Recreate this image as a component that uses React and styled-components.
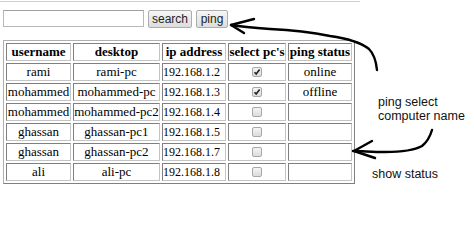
import React from "react";
import styled, { createGlobalStyle } from "styled-components";

const Global = createGlobalStyle`
  html, body { margin: 0; padding: 0; background: #fff; }
  body { font-family: "Liberation Serif", "Times New Roman", serif; color: #000; }
`;

const Page = styled.div`
  position: relative;
  width: 474px;
  height: 247px;
  overflow: hidden;
  background: #fff;
`;

const TopRule = styled.div`
  margin-top: 1px;
  width: 360px;
  height: 0;
  border-top: 1px solid #d0d0d0;
`;

const SearchBar = styled.form`
  display: flex;
  align-items: flex-start;
  gap: 4px;
  margin: 8px 0 0 3px;
`;

const SearchInput = styled.input`
  box-sizing: border-box;
  width: 141px;
  height: 17px;
  margin: 0;
  border: 1px solid #b8b8b8;
  border-top-color: #a0a0a0;
  background: #fff;
  padding: 0 2px;
`;

const Button = styled.button`
  box-sizing: border-box;
  width: ${(p) => p.$w}px;
  height: 18px;
  margin: 0;
  padding: 0;
  border: 1px solid #adadad;
  border-radius: 2px;
  background: linear-gradient(#f6f6f6, #dddddd);
  font-family: "Liberation Sans", Arial, sans-serif;
  font-size: 12px;
  line-height: 16px;
  color: #222;
`;

const Table = styled.table`
  margin: 12px 0 0 3px;
  width: 352px;
  table-layout: fixed;
  border-collapse: separate;
  border-spacing: 2px;
  border: 1px solid;
  border-color: #b0b0b0 #808080 #808080 #b0b0b0;
  font-size: 13px;
  line-height: 16px;
`;

const Cell = styled.td`
  box-sizing: border-box;
  height: 18px;
  padding: 0;
  border: 1px solid;
  border-color: #808080 #c4c4c4 #c4c4c4 #808080;
  text-align: ${(p) => (p.$left ? "left" : "center")};
  font-size: ${(p) => (p.$ip ? "12px" : "13px")};
  white-space: nowrap;
  overflow: hidden;
  vertical-align: middle;
`;

const Head = styled(Cell).attrs({ as: "th" })`
  font-weight: bold;
  text-align: center;
`;

const Check = styled.span`
  display: inline-block;
  box-sizing: border-box;
  width: 10px;
  height: 10px;
  margin-top: 3px;
  vertical-align: top;
  border: 1px solid #a8a8a8;
  border-radius: 2px;
  background: linear-gradient(#f4f4f4, #dcdcdc);
  position: relative;
  svg { position: absolute; left: 0; top: 0; }
`;

const Note = styled.div`
  position: absolute;
  left: ${(p) => p.$x}px;
  top: ${(p) => p.$y}px;
  font-family: "Liberation Sans", Arial, sans-serif;
  font-size: 12.5px;
  line-height: 14px;
  color: #111;
`;

const Overlay = styled.svg`
  position: absolute;
  left: 0;
  top: 0;
  pointer-events: none;
`;

const rows = [
  ["rami", "rami-pc", "192.168.1.2", true, "online"],
  ["mohammed", "mohammed-pc", "192.168.1.3", true, "offline"],
  ["mohammed", "mohammed-pc2", "192.168.1.4", false, ""],
  ["ghassan", "ghassan-pc1", "192.168.1.5", false, ""],
  ["ghassan", "ghassan-pc2", "192.168.1.7", false, ""],
  ["ali", "ali-pc", "192.168.1.8", false, ""],
];

function Box({ checked }) {
  return (
    <Check role="checkbox" aria-checked={checked}>
      {checked && (
        <svg width="8" height="8" viewBox="0 0 8 8">
          <path d="M1.5 4.2 L3.2 6 L6.6 1.6" fill="none" stroke="#222" strokeWidth="1.6" />
        </svg>
      )}
    </Check>
  );
}

export default function App() {
  return (
    <Page>
      <Global />
      <TopRule />
      <SearchBar onSubmit={(e) => e.preventDefault()}>
        <SearchInput type="text" />
        <Button $w={44} type="button">search</Button>
        <Button $w={32} type="button">ping</Button>
      </SearchBar>
      <Table>
        <colgroup>
          <col style={{ width: 65 }} />
          <col style={{ width: 87 }} />
          <col style={{ width: 64 }} />
          <col style={{ width: 58 }} />
          <col style={{ width: 64 }} />
        </colgroup>
        <thead>
          <tr>
            <Head>username</Head>
            <Head>desktop</Head>
            <Head>ip address</Head>
            <Head>select pc's</Head>
            <Head>ping status</Head>
          </tr>
        </thead>
        <tbody>
          {rows.map((r, i) => (
            <tr key={i}>
              <Cell>{r[0]}</Cell>
              <Cell>{r[1]}</Cell>
              <Cell $left $ip>{r[2]}</Cell>
              <Cell><Box checked={r[3]} /></Cell>
              <Cell>{r[4]}</Cell>
            </tr>
          ))}
        </tbody>
      </Table>
      <Note $x={378} $y={95}>ping select<br />computer name</Note>
      <Note $x={372} $y={167}>show status</Note>
      <Overlay width="474" height="247" viewBox="0 0 474 247">
        <g fill="none" stroke="#000" strokeWidth="2.4" strokeLinecap="round" strokeLinejoin="round">
          <path d="M377 70 C376 60 374 54 369 49 C360 42 345 38 330 36 C310 32 290 30 270 29 C255 28 242 27 231 25" />
          <path d="M254 19 L231 25 L244 33" />
          <path d="M432 130 C430 137 427 142 422 146 C413 151 398 152 385 152 C372 152 362 151 353 151" />
          <path d="M372 141 L354 151 L375 158" />
        </g>
      </Overlay>
    </Page>
  );
}
